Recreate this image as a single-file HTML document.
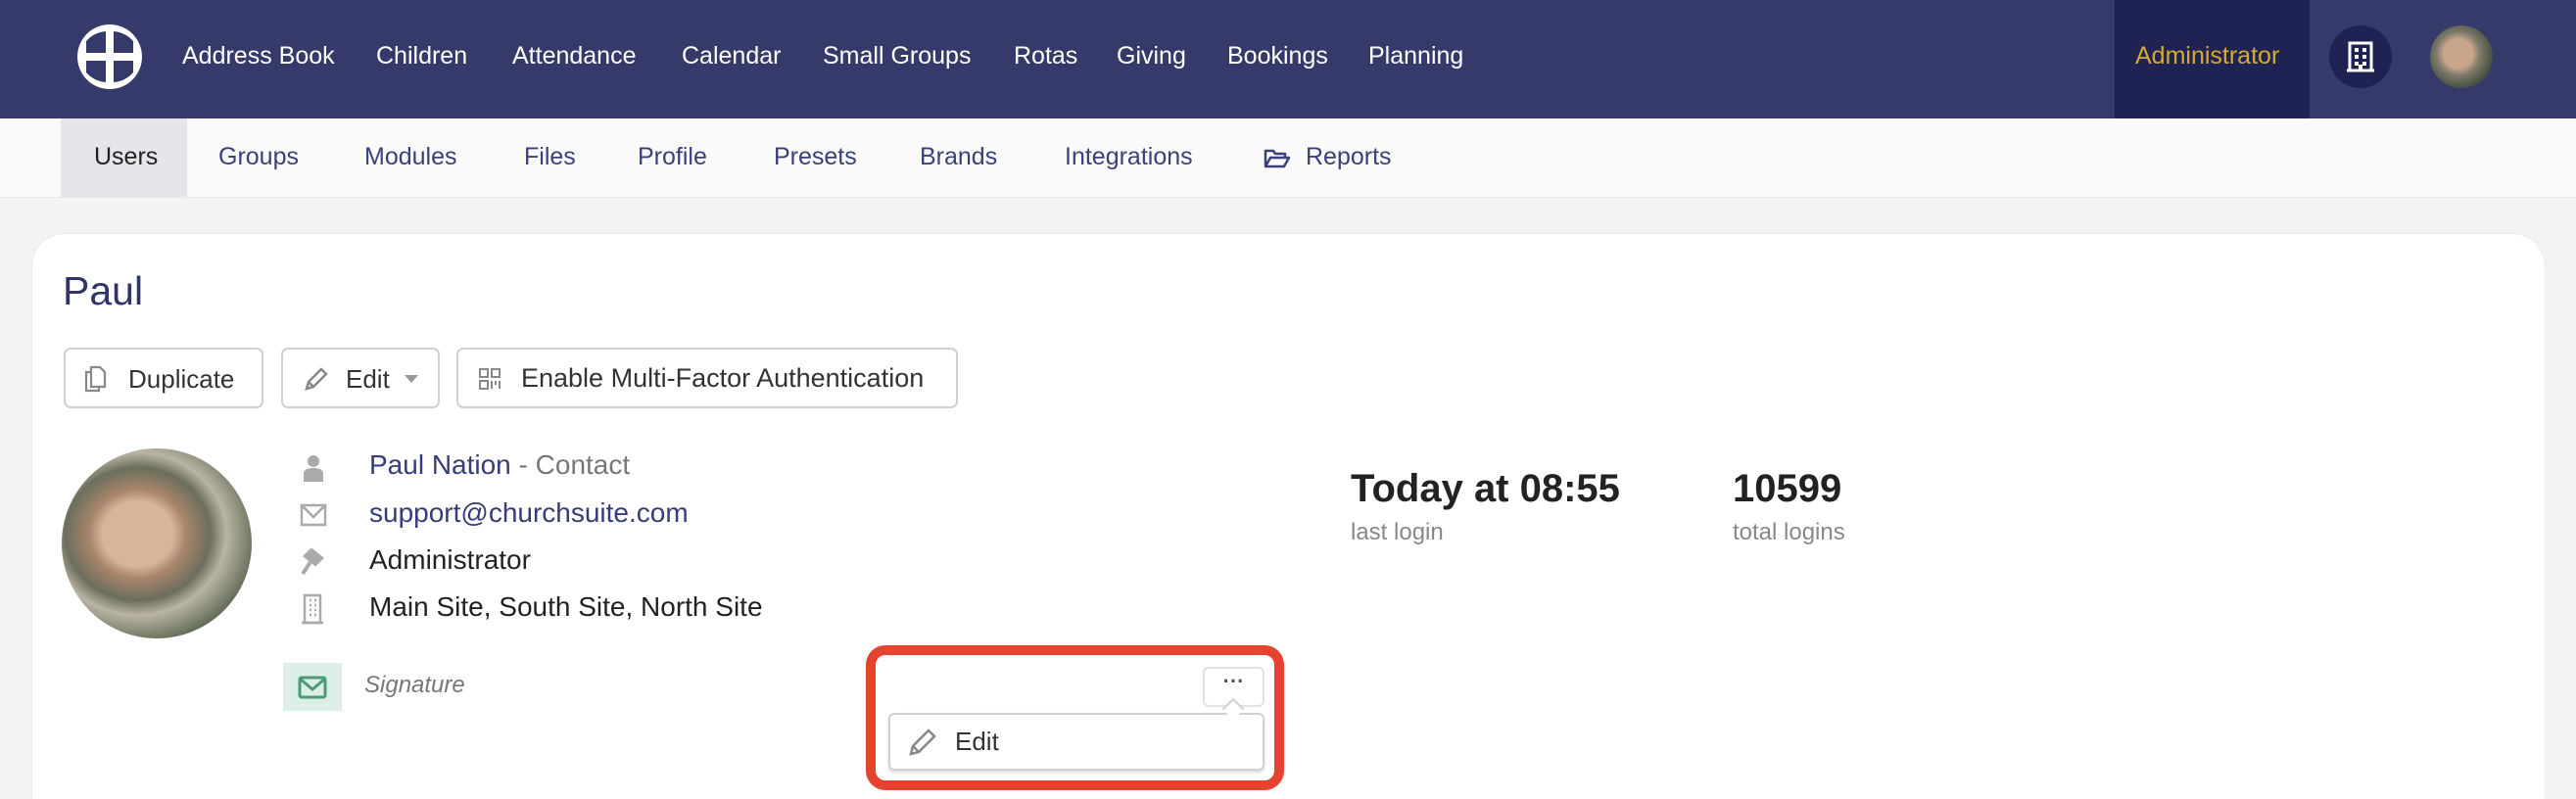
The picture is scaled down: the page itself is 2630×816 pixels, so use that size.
<!DOCTYPE html>
<html><head><meta charset="utf-8"><style>
*{box-sizing:border-box;margin:0;padding:0}
html,body{width:2630px;height:816px;overflow:hidden}
body{background:#f3f2f4;font-family:"Liberation Sans",sans-serif;position:relative}
.a{position:absolute;white-space:nowrap}
.hdr{position:absolute;left:0;top:0;width:2630px;height:121px;background:#353a6b}
.nav{color:#fff;font-size:25px;top:43px}
.sub{position:absolute;left:0;top:121px;width:2630px;height:81px;background:#fafafa;border-bottom:1px solid #e6e6ea}
.st{color:#3b4079;font-size:25px;top:146px}
.card{position:absolute;left:32px;top:238px;width:2567px;height:578px;background:#fff;border-radius:34px 34px 0 0;border:1px solid #ebeaee;border-bottom:none}
.btn{position:absolute;top:355px;height:62px;border:2px solid #d0d0d4;border-radius:7px;background:#fff;font-size:26px;color:#333}
.row{font-size:28px;color:#222}
</style></head><body>
<div class="hdr"></div>
<svg class="a" style="left:78px;top:24px" width="68" height="68" viewBox="0 0 68 68"><circle cx="34" cy="34" r="33" fill="#fff"/><path d="M30 8 Q18 9 10 18 L10 30 L30 30 Z M38 8 Q50 9 58 18 L58 30 L38 30 Z M30 60 Q18 59 10 50 L10 38 L30 38 Z M38 60 Q50 59 58 50 L58 38 L38 38 Z" fill="#353a6b"/></svg>
<div class="a nav" style="left:186px">Address Book</div>
<div class="a nav" style="left:384px">Children</div>
<div class="a nav" style="left:523px">Attendance</div>
<div class="a nav" style="left:696px">Calendar</div>
<div class="a nav" style="left:840px">Small Groups</div>
<div class="a nav" style="left:1035px">Rotas</div>
<div class="a nav" style="left:1140px">Giving</div>
<div class="a nav" style="left:1253px">Bookings</div>
<div class="a nav" style="left:1397px">Planning</div>
<div class="a" style="left:2159px;top:0;width:199px;height:121px;background:#1f2353"></div>
<div class="a nav" style="left:2180px;color:#d6a932">Administrator</div>
<div class="a" style="left:2378px;top:26px;width:64px;height:64px;border-radius:50%;background:#1f2353"></div>
<svg class="a" style="left:2396px;top:42px" width="28" height="32" viewBox="0 0 28 32"><path d="M3 2h22v28H3z" fill="none" stroke="#fff" stroke-width="3"/><path d="M0 30h28" stroke="#fff" stroke-width="3"/><rect x="8" y="7" width="4" height="4" fill="#fff"/><rect x="16" y="7" width="4" height="4" fill="#fff"/><rect x="8" y="14" width="4" height="4" fill="#fff"/><rect x="16" y="14" width="4" height="4" fill="#fff"/><rect x="8" y="21" width="4" height="4" fill="#fff"/><rect x="16" y="21" width="4" height="4" fill="#fff"/><rect x="12" y="24" width="4" height="6" fill="#fff"/></svg>
<div class="a" style="left:2481px;top:26px;width:64px;height:64px;border-radius:50%;background:radial-gradient(circle at 45% 45%,#c9a58c 0 30%,#7d7a6a 45%,#3f4a3c 75%)"></div>
<div class="sub"></div>
<div class="a" style="left:62px;top:121px;width:129px;height:81px;background:#e6e5ea"></div>
<div class="a st" style="left:96px;color:#222">Users</div>
<div class="a st" style="left:223px">Groups</div>
<div class="a st" style="left:372px">Modules</div>
<div class="a st" style="left:535px">Files</div>
<div class="a st" style="left:651px">Profile</div>
<div class="a st" style="left:790px">Presets</div>
<div class="a st" style="left:939px">Brands</div>
<div class="a st" style="left:1087px">Integrations</div>
<svg class="a" style="left:1290px;top:152px" width="28" height="20" viewBox="0 0 28 20"><path d="M2 18V2h8l2 3h10v4M2 18l5-9h19l-5 9z" fill="none" stroke="#3b4079" stroke-width="2.5" stroke-linejoin="round"/></svg>
<div class="a st" style="left:1333px">Reports</div>
<div class="card"></div>
<div class="a" style="left:64px;top:274px;font-size:41px;color:#2f346a">Paul</div>
<div class="btn" style="left:65px;width:204px"><svg class="a" style="left:18px;top:16px" width="24" height="28" viewBox="0 0 24 28"><path d="M8 2h9l5 5v15H8z M8 7H3v19h13v-4" fill="none" stroke="#888" stroke-width="2.2"/></svg><span class="a" style="left:64px;top:15px">Duplicate</span></div>
<div class="btn" style="left:287px;width:162px"><svg class="a" style="left:20px;top:16px" width="26" height="28" viewBox="0 0 26 28"><path d="M4 24l2-7 13-13 5 5-13 13z M6 17l5 5" fill="none" stroke="#888" stroke-width="2.5"/></svg><span class="a" style="left:64px;top:15px">Edit</span><span class="a" style="left:124px;top:26px;border:7px solid transparent;border-top:8px solid #999"></span></div>
<div class="btn" style="left:466px;width:512px"><svg class="a" style="left:20px;top:18px" width="24" height="24" viewBox="0 0 24 24" fill="none" stroke="#888" stroke-width="2"><rect x="2" y="2" width="8" height="8"/><rect x="14" y="2" width="8" height="8"/><rect x="2" y="14" width="8" height="8"/><path d="M14 14v8M18 14v4M22 14v8"/></svg><span class="a" style="left:64px;top:14px;font-size:27px">Enable Multi-Factor Authentication</span></div>
<div class="a" style="left:63px;top:458px;width:194px;height:194px;border-radius:50%;background:radial-gradient(ellipse at 40% 45%,#d7b49b 0 22%,#a8866c 30%,#6c6e5d 45%,#b9b4a3 55%,#48563f 80%)"></div>
<svg class="a" style="left:308px;top:464px" width="24" height="28" viewBox="0 0 24 28"><circle cx="12" cy="7" r="6" fill="#aaa"/><path d="M2 28v-8q0-6 10-6t10 6v8z" fill="#aaa"/></svg>
<svg class="a" style="left:306px;top:514px" width="28" height="24" viewBox="0 0 28 24" fill="none" stroke="#aaa" stroke-width="2.5"><rect x="2" y="2" width="24" height="20"/><path d="M2 2l12 12 12-12"/></svg>
<svg class="a" style="left:306px;top:560px" width="28" height="28" viewBox="0 0 28 28"><path d="M12 2l10 8-6 6-10-8z M11 14L3 26" fill="#aaa" stroke="#aaa" stroke-width="4"/></svg>
<svg class="a" style="left:308px;top:606px" width="22" height="32" viewBox="0 0 22 32" fill="none" stroke="#aaa" stroke-width="2.5"><rect x="3" y="2" width="16" height="28"/><path d="M0 30h22M8 7h2M13 7h2M8 12h2M13 12h2M8 17h2M13 17h2M8 22h2M13 22h2"/></svg>
<div class="a row" style="left:377px;top:459px"><span style="color:#373c78">Paul Nation</span><span style="color:#777"> - Contact</span></div>
<div class="a row" style="left:377px;top:508px;color:#373c78">support@churchsuite.com</div>
<div class="a row" style="left:377px;top:556px">Administrator</div>
<div class="a row" style="left:377px;top:604px">Main Site, South Site, North Site</div>
<div class="a" style="left:1379px;top:477px;font-size:40px;font-weight:bold;color:#222">Today at 08:55</div>
<div class="a" style="left:1379px;top:530px;font-size:24px;color:#888">last login</div>
<div class="a" style="left:1769px;top:477px;font-size:40px;font-weight:bold;color:#222">10599</div>
<div class="a" style="left:1769px;top:530px;font-size:24px;color:#888">total logins</div>
<div class="a" style="left:289px;top:677px;width:60px;height:49px;background:#dcefe6"></div>
<svg class="a" style="left:304px;top:690px" width="30" height="24" viewBox="0 0 30 24" fill="none" stroke="#4c9a7a" stroke-width="3"><rect x="2" y="2" width="26" height="20" rx="2"/><path d="M2 3l13 11 13-11"/></svg>
<div class="a" style="left:372px;top:686px;font-size:24px;font-style:italic;color:#777">Signature</div>
<div class="a" style="left:884px;top:659px;width:427px;height:148px;border:10px solid #e5432d;border-radius:20px"></div>
<div class="a" style="left:1228px;top:681px;width:63px;height:41px;border:2px solid #e2e2e6;border-radius:6px;background:#fff;text-align:center;font-size:22px;font-weight:bold;color:#555;line-height:26px">···</div>
<div class="a" style="left:907px;top:728px;width:384px;height:59px;border:2px solid #d0d0d4;border-radius:6px;background:#fff;box-shadow:0 2px 3px rgba(0,0,0,.15)"></div>
<div class="a" style="left:1251px;top:716px;width:16px;height:16px;background:#fff;border-left:2px solid #d0d0d4;border-top:2px solid #d0d0d4;transform:rotate(45deg)"></div>
<svg class="a" style="left:926px;top:742px" width="30" height="32" viewBox="0 0 30 32"><path d="M4 28l2-8 16-16 6 6-16 16z M6 20l6 6" fill="none" stroke="#888" stroke-width="2.5"/></svg>
<div class="a" style="left:975px;top:742px;font-size:26px;color:#333">Edit</div>
</body></html>
